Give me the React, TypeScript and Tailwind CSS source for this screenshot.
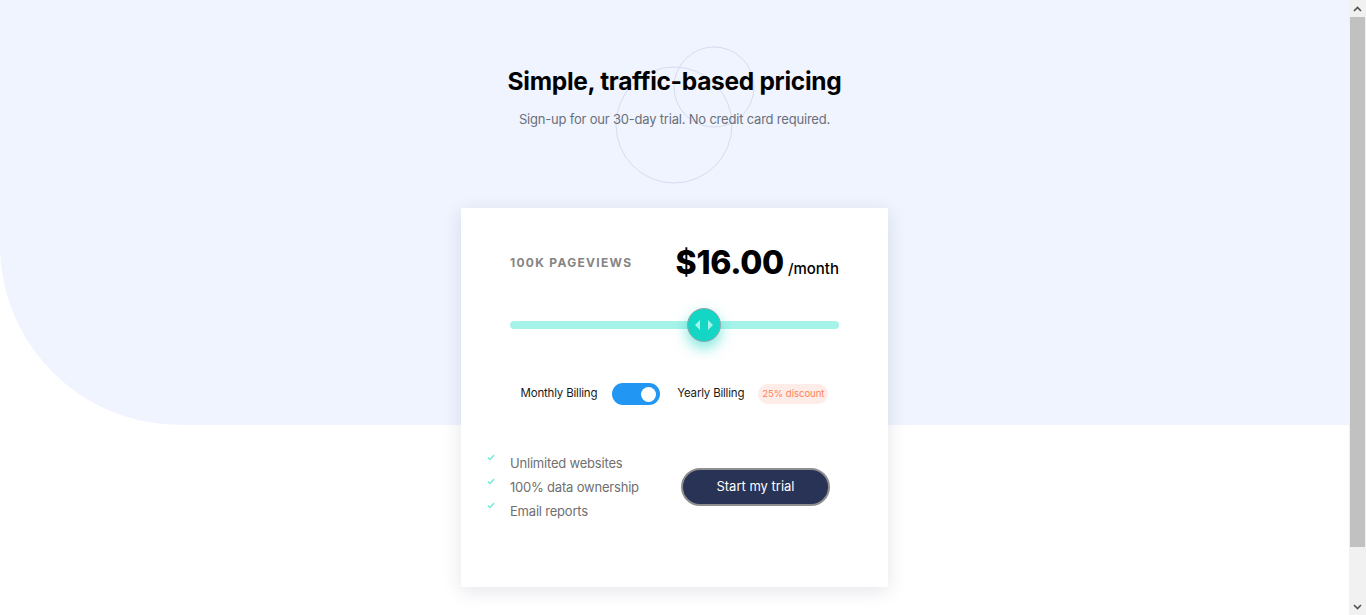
import React from "react";

const features = ["Unlimited websites", "100% data ownership", "Email reports"];

const Check = () => (
  <svg width="8" height="7" viewBox="0 0 9 8" className="mt-[3px] shrink-0">
    <path d="M1 4.2 3.2 6.3 8 1.3" fill="none" stroke="#7ee8dc" strokeWidth="1.8" />
  </svg>
);

// window scrollbar as it appears in the shot
const Scrollbar = () => (
  <div className="fixed right-0 top-0 flex h-screen w-[17px] flex-col bg-[#f1f1f1]">
    <div className="flex h-[17px] items-center justify-center">
      <svg width="9" height="6" viewBox="0 0 9 6">
        <path d="M1 5 4.5 1.5 8 5" fill="none" stroke="#505050" strokeWidth="1.6" />
      </svg>
    </div>
    <div className="mx-[1px] h-[530px] bg-[#c1c1c1]" />
    <div className="flex-1" />
    <div className="flex h-[17px] items-center justify-center">
      <svg width="9" height="6" viewBox="0 0 9 6">
        <path d="M1 1 4.5 4.5 8 1" fill="none" stroke="#505050" strokeWidth="1.6" />
      </svg>
    </div>
  </div>
);

export default function App() {
  return (
    <div className="relative min-h-screen w-[1349px] bg-white font-['Inter',sans-serif] pb-[87px]">
      {/* blue backdrop */}
      <div className="absolute left-0 right-0 top-0 h-[425px] bg-[#eff4fe] rounded-bl-[180px]" />

      <div className="relative">
        {/* header */}
        <header className="relative flex flex-col items-center pt-[64px]">
          <svg
            className="absolute left-1/2 top-[46px] -translate-x-1/2 ml-[19px]"
            width="160"
            height="140"
            viewBox="0 0 160 140"
          >
            <circle cx="60" cy="79" r="58" fill="none" stroke="#d6dcf0" strokeWidth="1" />
            <circle cx="100" cy="41" r="40" fill="none" stroke="#d6dcf0" strokeWidth="1" />
          </svg>
          <h1 className="relative text-[24.5px] leading-[34px] font-bold text-black tracking-[-0.3px]">
            Simple, traffic-based pricing
          </h1>
          <p className="relative mt-[11px] text-[13px] leading-[20px] tracking-[-0.2px] text-[#6b6f7b]">
            Sign-up for our 30-day trial. No credit card required.
          </p>
        </header>

        {/* card */}
        <main className="mx-auto mt-[79px] w-[427px] h-[379px] bg-white shadow-[0_4px_18px_rgba(30,40,80,0.12)]">
          <div className="flex items-center justify-between px-[49px] pt-[33px]">
            <span className="text-[12px] font-bold tracking-[1.3px] text-[#858585]">100K PAGEVIEWS</span>
            <div className="flex items-baseline gap-[4px]">
              <span className="text-[32px] leading-[44px] font-extrabold tracking-[-0.3px] text-black">$16.00</span>
              <span className="text-[15px] font-medium text-black">/month</span>
            </div>
          </div>

          {/* slider */}
          <div className="relative mx-[49px] mt-[36px] h-[8px] rounded-full bg-[#a6f3ea]">
            <div className="absolute left-[177px] top-1/2 -translate-y-1/2 flex h-[34px] w-[34px] items-center justify-center gap-[8px] rounded-full border border-[#9aa3a8] bg-[#14d6c4] shadow-[0_6px_14px_rgba(16,213,194,0.55)]">
              <svg width="5" height="10" viewBox="0 0 5 10">
                <path d="M5 0 0 5 5 10z" fill="#a6f3ea" />
              </svg>
              <svg width="5" height="10" viewBox="0 0 5 10">
                <path d="M0 0 5 5 0 10z" fill="#a6f3ea" />
              </svg>
            </div>
          </div>

          {/* billing toggle */}
          <div className="mt-[54px] flex items-center justify-center text-[11.5px] tracking-[-0.2px] text-[#1a1a1a]">
            <span>Monthly Billing</span>
            <div className="ml-[15px] flex h-[22px] w-[48px] items-center justify-end rounded-full bg-[#2196f3] pr-[4px]">
              <div className="h-[15px] w-[15px] rounded-full bg-white" />
            </div>
            <span className="ml-[17px]">Yearly Billing</span>
            <span className="ml-[14px] rounded-full bg-[#fdece7] px-[4px] py-[3px] text-[9.5px] leading-[14px] tracking-normal text-[#ff8259]">
              25% discount
            </span>
          </div>

          {/* features + cta */}
          <div className="mt-[46px] flex items-center justify-between pl-[26px] pr-[58px]">
            <ul className="flex flex-col">
              {features.map((f) => (
                <li key={f} className="flex items-start gap-[15px] text-[13px] leading-[24px] tracking-[-0.2px] text-[#6f6f6f]">
                  <Check />
                  <span>{f}</span>
                </li>
              ))}
            </ul>
            <button className="h-[38px] w-[149px] rounded-full border-2 border-[#8e8e8e] bg-[#293356] text-[13px] text-white">
              Start my trial
            </button>
          </div>
        </main>
      </div>
      <Scrollbar />
    </div>
  );
}
